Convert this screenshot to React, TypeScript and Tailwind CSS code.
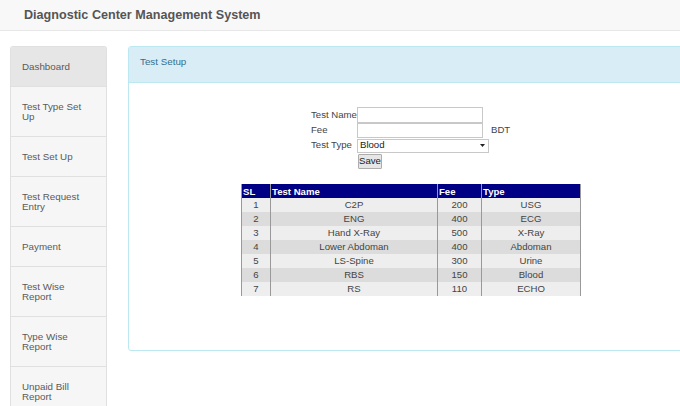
import React from "react";

const navItems: { lines: string[]; active?: boolean }[] = [
  { lines: ["Dashboard"], active: true },
  { lines: ["Test Type Set", "Up"] },
  { lines: ["Test Set Up"] },
  { lines: ["Test Request", "Entry"] },
  { lines: ["Payment"] },
  { lines: ["Test Wise", "Report"] },
  { lines: ["Type Wise", "Report"] },
  { lines: ["Unpaid Bill", "Report"] },
];

const rows = [
  ["1", "C2P", "200", "USG"],
  ["2", "ENG", "400", "ECG"],
  ["3", "Hand X-Ray", "500", "X-Ray"],
  ["4", "Lower Abdoman", "400", "Abdoman"],
  ["5", "LS-Spine", "300", "Urine"],
  ["6", "RBS", "150", "Blood"],
  ["7", "RS", "110", "ECHO"],
];

export default function App() {
  return (
    <div className="w-[680px] h-[406px] overflow-hidden bg-white font-['Liberation_Sans',Arial,sans-serif]">
      <div className="h-[31px] bg-[#f8f8f8] border-b border-[#e7e7e7] flex items-center pl-[24px]">
        <span className="text-[12.6px] font-bold text-[#555]">Diagnostic Center Management System</span>
      </div>
      <div className="flex items-start pt-[15px]">
        <div className="ml-[10px] w-[97px] shrink-0 border border-b-0 border-[#e0e0e0] rounded-t-[3px] overflow-hidden">
          {navItems.map((it) => (
            <div
              key={it.lines.join(" ")}
              className={
                (it.active ? "bg-[#e6e6e6] " : "bg-[#f6f6f6] ") +
                "border-b border-[#e0e0e0] pl-[11px] pr-[4px] pt-[14.5px] pb-[14.5px] text-[9.8px] leading-[10px] text-[#5a5a5a] whitespace-nowrap"
              }
            >
              {it.lines.map((l, i) => (
                <div key={i}>{l}</div>
              ))}
            </div>
          ))}
        </div>
        <div className="ml-[21px] w-[600px] shrink-0 h-[305px] border border-[#bce8f1] rounded-[3px]">
          <div className="h-[36px] bg-[#d9edf7] border-b border-[#bce8f1] flex items-center pl-[11px] pb-[4px]">
            <span className="text-[9.8px] text-[#31708f]">Test Setup</span>
          </div>
          <div className="pt-[24px] pl-[182px] text-[9.6px] text-[#444]">
            <div className="flex items-center h-[16px]">
              <span className="w-[46px]">Test Name</span>
              <div className="w-[126px] h-[16px] border border-[#c8c8c8] bg-white" />
            </div>
            <div className="flex items-center h-[15px]">
              <span className="w-[46px]">Fee</span>
              <div className="w-[126px] h-[15px] border border-[#c8c8c8] bg-white" />
              <span className="ml-[8px]">BDT</span>
            </div>
            <div className="flex items-center h-[15px]">
              <span className="w-[46px]">Test Type</span>
              <div className="w-[132px] h-[14px] border border-[#c8c8c8] bg-white flex items-center justify-between pl-[2px] pr-[3px] text-[#222]">
                <span>Blood</span>
                <svg width="5" height="3" viewBox="0 0 5 3"><path d="M0 0h5L2.5 3z" fill="#222" /></svg>
              </div>
            </div>
            <div className="flex items-center h-[15px] mt-[1px]">
              <span className="w-[47px]" />
              <div className="w-[24px] h-[15px] border border-[#adadad] bg-[#e6e6e6] rounded-[1px] flex items-center justify-center text-[#222]">
                Save
              </div>
            </div>
          </div>
          <div className="pl-[112px] pt-[15px]">
            <table className="table-fixed border-collapse w-[339px] text-[9.6px] text-[#444]">
              <colgroup>
                <col className="w-[29px]" />
                <col className="w-[167px]" />
                <col className="w-[44px]" />
                <col className="w-[99px]" />
              </colgroup>
              <thead>
                <tr className="h-[14px] bg-[#000084] text-white">
                  {["SL", "Test Name", "Fee", "Type"].map((h) => (
                    <th key={h} className="text-left font-bold pl-[1px] p-0 border-x border-[#999] leading-[13px]">
                      {h}
                    </th>
                  ))}
                </tr>
              </thead>
              <tbody>
                {rows.map((r, i) => (
                  <tr key={r[0]} className={(i % 2 === 0 ? "bg-[#eeeeee]" : "bg-[#dcdcdc]") + " h-[14px]"}>
                    {r.map((c, j) => (
                      <td key={j} className="text-center p-0 border-x border-[#999] leading-[14px]">
                        {c}
                      </td>
                    ))}
                  </tr>
                ))}
              </tbody>
            </table>
          </div>
        </div>
      </div>
    </div>
  );
}
